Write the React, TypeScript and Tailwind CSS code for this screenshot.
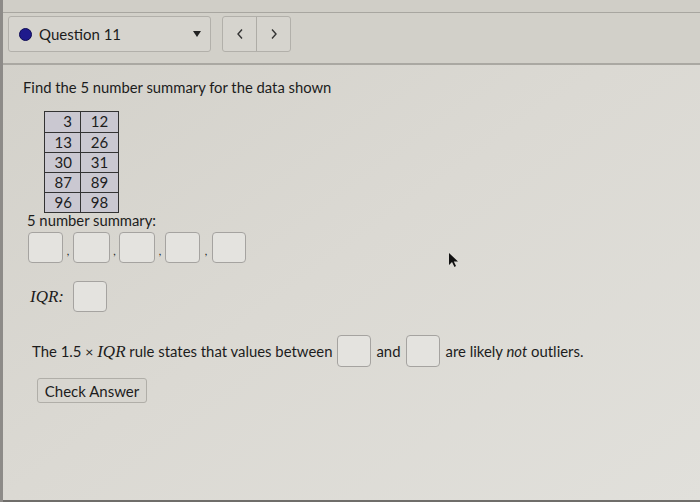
import React from "react";

const Box = ({ w = 35, h = 31 }: { w?: number; h?: number }) => (
  <div
    className="border border-[#a5a3a0] rounded-[4px] bg-[#e4e3df]"
    style={{ width: w, height: h }}
  />
);

const Comma = ({ w = 6 }: { w?: number }) => (
  <span className="text-[11px] mb-[3px] text-center" style={{ width: w }}>,</span>
);

export default function App() {
  const rows = [
    [3, 12],
    [13, 26],
    [30, 31],
    [87, 89],
    [96, 98],
  ];
  return (
    <div
      className="w-[700px] h-[502px] overflow-hidden flex bg-gradient-to-br from-[#d2d0c9] via-[#dbd9d3] to-[#e1e0db] text-[#1c1c1c]"
      style={{ fontFamily: "Lato, 'Open Sans', sans-serif" }}
    >
      <div className="w-[3px] h-full bg-[#8d8b88] shrink-0" />
      <div className="flex-1 flex flex-col">
        <div className="h-[13px] border-b border-[#a8a6a0] bg-[#d0cec7]" />
        <div className="h-[52px] flex items-start pt-[3px] pl-[5px] gap-[11px] border-b-2 border-[#aaa8a2] bg-[#d2d0c9]">
          <div className="w-[203px] h-[36px] rounded-[3px] border border-[#b2b0aa] bg-[#d6d4ce] flex items-center pl-[10px] pr-[9px]">
            <div className="w-[13px] h-[13px] rounded-full bg-[#1f1a8c] border border-[#0e0b55]" />
            <span className="ml-[7px] text-[15px]">Question 11</span>
            <div className="ml-auto w-0 h-0 border-l-[4.5px] border-r-[4.5px] border-t-[6px] border-l-transparent border-r-transparent border-t-[#222]" />
          </div>
          <div className="w-[69px] h-[36px] rounded-[3px] border border-[#b2b0aa] bg-[#d6d4ce] flex">
            <div className="w-[34px] h-full flex items-center justify-center border-r border-[#aeaca6] text-[15px] text-[#333]">
              <svg width="8" height="12" viewBox="0 0 8 12"><path d="M6 1.5 L2 6 L6 10.5" fill="none" stroke="#333" strokeWidth="1.4" /></svg>
            </div>
            <div className="flex-1 flex items-center justify-center">
              <svg width="8" height="12" viewBox="0 0 8 12"><path d="M2 1.5 L6 6 L2 10.5" fill="none" stroke="#333" strokeWidth="1.4" /></svg>
            </div>
          </div>
        </div>
        <div className="pl-[20px] pt-[13px] text-[14.8px] leading-[18px]">
          <div>Find the 5 number summary for the data shown</div>
          <div className="mt-[15px] ml-[21px] w-[75px] border border-[#333] bg-[#cac8d1]">
            {rows.map((r, i) => (
              <div key={i} className={`flex h-[20px] ${i > 0 ? "border-t border-[#333]" : ""}`}>
                <div className="w-[36px] border-r border-[#333] text-right pr-[8px] text-[15px] leading-[19px]">{r[0]}</div>
                <div className="flex-1 text-center text-[15px] leading-[19px]">{r[1]}</div>
              </div>
            ))}
          </div>
          <div className="ml-[4px] -mt-[2px]">5 number summary:</div>
          <div className="ml-[5px] mt-[3px] flex items-end gap-[2px]">
            <Box /><Comma />
            <Box w={37} /><Comma w={5} />
            <Box w={36} /><Comma />
            <Box w={35} /><Comma w={8} />
            <Box w={34} />
          </div>
          <div className="ml-[7px] mt-[18px] flex items-center">
            <span className="italic text-[17px]" style={{ fontFamily: "'Liberation Serif', serif" }}>IQR:</span>
            <div className="ml-[9px]"><Box w={34} h={31} /></div>
          </div>
          <div className="ml-[9px] mt-[23px] flex items-center text-[14.9px]">
            <span>The 1.5 <span className="text-[14px]">×</span> <span className="italic text-[17px]" style={{ fontFamily: "'Liberation Serif', serif" }}>IQR</span> rule states that values between</span>
            <div className="ml-[5px]"><Box w={34} h={32} /></div>
            <span className="ml-[5px]">and</span>
            <div className="ml-[5px]"><Box w={34} h={32} /></div>
            <span className="ml-[6px]">are likely <span className="italic">not</span> outliers.</span>
          </div>
          <div className="ml-[14px] mt-[11px] w-[110px] h-[25px] border border-[#b0aea8] rounded-[3px] bg-[#d8d6d0] flex items-center justify-center text-[15px]">
            Check Answer
          </div>
        </div>
        <div className="flex-1" />
        <div className="h-[2px] bg-[#6f6d6a]" />
      </div>
      <svg className="absolute" style={{ left: 448, top: 252 }} width="12" height="16" viewBox="0 0 12 16">
        <path d="M1 1 L1 13 L4 10 L6.5 15 L8 14 L5.8 9.5 L10 9.5 Z" fill="#111" />
      </svg>
    </div>
  );
}
